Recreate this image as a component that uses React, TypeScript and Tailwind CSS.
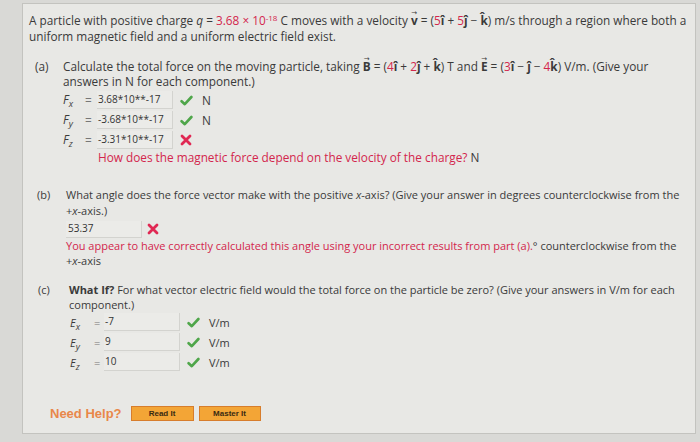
import React from "react";

const red = "text-[#d3264c]";

function Check() {
  return (
    <svg width="13" height="11" viewBox="0 0 13 11" className="shrink-0">
      <path d="M1.6 6.2 L4.8 9.2 L11.4 2" fill="none" stroke="#4fa64a" strokeWidth="2.6" strokeLinecap="round" strokeLinejoin="round" />
    </svg>
  );
}

function Cross() {
  return (
    <svg width="12" height="12" viewBox="0 0 12 12" className="shrink-0">
      <path d="M2 2 L10 10 M10 2 L2 10" fill="none" stroke="#e02853" strokeWidth="2.8" strokeLinecap="round" />
    </svg>
  );
}

function Vec({ c }: { c: string }) {
  return (
    <span className="relative inline-block font-bold leading-none">
      <span className="absolute left-0 right-0 -top-[6px] text-center text-[7px] font-normal leading-none">&#8594;</span>
      {c}
    </span>
  );
}

function Hat({ c }: { c: string }) {
  return <span className="font-bold">{c}</span>;
}

type RowProps = {
  sym: string;
  sub: string;
  value: string;
  ok: boolean;
  unit?: string;
  labelW: string;
  eqW: string;
};

function AnswerRow({ sym, sub, value, ok, unit, labelW, eqW }: RowProps) {
  return (
    <div className="flex items-center h-[20px]">
      <span className={`italic ${labelW} leading-none`}>
        {sym}
        <span className="relative top-[3px] text-[9px] italic">{sub}</span>
      </span>
      <span className={`${eqW} text-[#777]`}>=</span>
      <div className="w-[76px] h-[18px] bg-[#ebebe8] border-b border-r border-[#d3d3cf] text-[10px] pl-[1px] flex items-center text-[#333]">
        {value}
      </div>
      <span className="ml-[7px] w-[16px] flex">{ok ? <Check /> : <Cross />}</span>
      {unit && <span className="ml-[6px]">{unit}</span>}
    </div>
  );
}

export default function App() {
  return (
    <div
      className="w-[700px] h-[442px] overflow-hidden bg-[#d9d9d6] text-[11.8px] leading-[15px] text-[#3a3a3a]"
      style={{ fontFamily: '"Open Sans", "DejaVu Sans", sans-serif' }}
    >
      <div className="ml-[22px] mt-[3px] mr-[4px] h-[431px] bg-[#e8e8e5] border border-[#c3c3bf]">
        {/* intro */}
        <div className="pl-[6px] pt-[8px] pr-[8px] leading-[16px]">
          A particle with positive charge <i>q</i> ={" "}
          <span className={red}>
            3.68 × 10<sup className="text-[8px]">-18</sup>
          </span>{" "}
          C moves with a velocity <Vec c="v" /> = (<span className={red}>5</span>
          <Hat c="î" /> + <span className={red}>5</span>
          <Hat c="ĵ" /> − <Hat c="k̂" />) m/s through a region where both a uniform magnetic field and a uniform electric field exist.
        </div>

        {/* part a */}
        <div className="flex mt-[15px] pl-[12px] pr-[30px]">
          <span className="w-[28px] shrink-0">(a)</span>
          <div>
            <div>
              Calculate the total force on the moving particle, taking <Vec c="B" /> = (<span className={red}>4</span>
              <Hat c="î" /> + <span className={red}>2</span>
              <Hat c="ĵ" /> + <Hat c="k̂" />) T and <Vec c="E" /> = (<span className={red}>3</span>
              <Hat c="î" /> − <Hat c="ĵ" /> − <span className={red}>4</span>
              <Hat c="k̂" />) V/m. (Give your answers in N for each component.)
            </div>
            <div className="mt-[1px]">
              <AnswerRow sym="F" sub="x" value="3.68*10**-17" ok unit="N" labelW="w-[22px]" eqW="w-[12px]" />
              <AnswerRow sym="F" sub="y" value="-3.68*10**-17" ok unit="N" labelW="w-[22px]" eqW="w-[12px]" />
              <AnswerRow sym="F" sub="z" value="-3.31*10**-17" ok={false} labelW="w-[22px]" eqW="w-[12px]" />
              <div className="pl-[35px] leading-[14px]">
                <span className={red}>How does the magnetic force depend on the velocity of the charge?</span> N
              </div>
            </div>
          </div>
        </div>

        {/* part b */}
        <div className="flex mt-[23px] pl-[14px] pr-[6px] text-[11px]">
          <span className="w-[29px] shrink-0">(b)</span>
          <div>
            <div className="leading-[16px]">
              What angle does the force vector make with the positive <i>x</i>-axis? (Give your answer in degrees counterclockwise from the +<i>x</i>-axis.)
            </div>
            <div className="flex items-center h-[18px] mt-[1px]">
              <div className="w-[76px] h-[17px] bg-[#ebebe8] border-b border-r border-[#d3d3cf] text-[10px] pl-[2px] flex items-center text-[#333]">
                53.37
              </div>
              <span className="ml-[5px] flex">
                <Cross />
              </span>
            </div>
            <div className="pr-[12px]">
              <span className={red}>You appear to have correctly calculated this angle using your incorrect results from part (a).</span>° counterclockwise from the +<i>x</i>-axis
            </div>
          </div>
        </div>

        {/* part c */}
        <div className="flex mt-[14px] pl-[15px] pr-[16px] text-[11px]">
          <span className="w-[31px] shrink-0">(c)</span>
          <div>
            <div>
              <b>What If?</b> For what vector electric field would the total force on the particle be zero? (Give your answers in V/m for each component.)
            </div>
            <div className="pl-[1px]">
              <AnswerRow sym="E" sub="x" value="-7" ok unit="V/m" labelW="w-[24px]" eqW="w-[10px]" />
              <AnswerRow sym="E" sub="y" value="9" ok unit="V/m" labelW="w-[24px]" eqW="w-[10px]" />
              <AnswerRow sym="E" sub="z" value="10" ok unit="V/m" labelW="w-[24px]" eqW="w-[10px]" />
            </div>
          </div>
        </div>

        {/* help */}
        <div className="flex items-center mt-[34px] pl-[27px]" style={{ fontFamily: '"Liberation Sans", Arial, sans-serif' }}>
          <span className="text-[13px] font-bold text-[#e8874a] mr-[9px]">Need Help?</span>
          <button className="w-[63px] h-[15px] bg-[#f3a536] border border-[#d77d2c] text-[8px] font-bold text-[#3a2a12] leading-none">Read It</button>
          <button className="ml-[5px] w-[62px] h-[15px] bg-[#f3a536] border border-[#d77d2c] text-[8px] font-bold text-[#3a2a12] leading-none">Master It</button>
        </div>
      </div>
    </div>
  );
}
